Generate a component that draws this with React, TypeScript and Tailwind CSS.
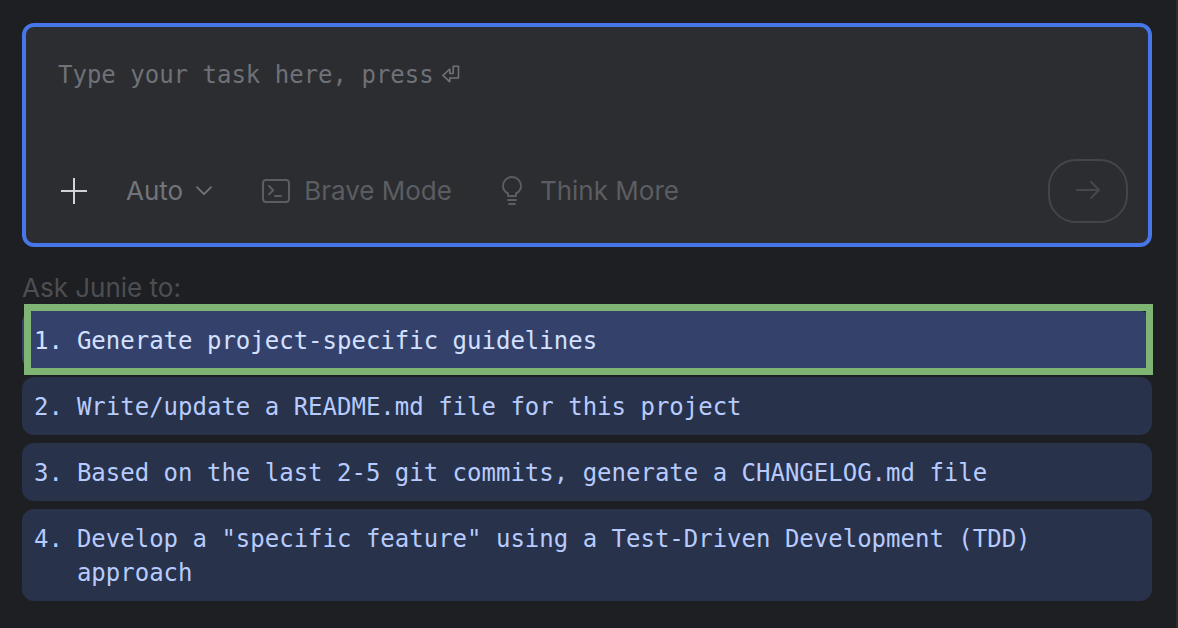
import { useState } from "react";

const suggestions = [
  "Generate project-specific guidelines",
  "Write/update a README.md file for this project",
  "Based on the last 2-5 git commits, generate a CHANGELOG.md file",
  'Develop a "specific feature" using a Test-Driven Development (TDD) approach',
];

function ReturnIcon() {
  return (
    <svg width="18" height="20" viewBox="0 0 18 20" fill="none" stroke="currentColor" strokeWidth="1.6" strokeLinejoin="round">
      <path d="M11.200 1.300h5.300v11.700H7.800v3.800L1 10.300l6.800-6.300v4.500h3.400z" />
    </svg>
  );
}

function PlusIcon() {
  return (
    <svg width="26" height="26" viewBox="0 0 26 26" fill="none" stroke="currentColor" strokeWidth="2">
      <path d="M13 0v26M0 13h26" />
    </svg>
  );
}

function ChevronIcon() {
  return (
    <svg width="16" height="10" viewBox="0 0 16 10" fill="none" stroke="currentColor" strokeWidth="1.8" strokeLinecap="round" strokeLinejoin="round">
      <path d="M1 1.2l7 7L15 1.200" />
    </svg>
  );
}

function TerminalIcon() {
  return (
    <svg width="28" height="24" viewBox="0 0 28 24" fill="none" stroke="currentColor" strokeWidth="2" strokeLinecap="round" strokeLinejoin="round">
      <rect x="1" y="1" width="26" height="22" rx="3" />
      <path d="M7 7l4.200 4.200L7 15.400M13 17h6" />
    </svg>
  );
}

function BulbIcon() {
  return (
    <svg width="20" height="30" viewBox="0 0 20 30" fill="none" stroke="currentColor" strokeWidth="2" strokeLinecap="round" strokeLinejoin="round">
      <path d="M6 20v-2.500C3 15.900 1 13.300 1 10a9 9 0 0 1 18 0c0 3.300-2 5.900-5 7.500V20z" />
      <path d="M6 24h8M7 28h6" />
    </svg>
  );
}

function ArrowIcon() {
  return (
    <svg width="24" height="20" viewBox="0 0 24 20" fill="none" stroke="currentColor" strokeWidth="2" strokeLinecap="round" strokeLinejoin="round">
      <path d="M1 9h22M15 1l8 8-8 8" />
    </svg>
  );
}

export default function App() {
  const [task, setTask] = useState("");
  const [brave, setBrave] = useState(false);
  const [think, setThink] = useState(false);

  return (
    <main className="min-h-screen bg-[#1e1f22] border-r-2 border-[#2b2d30] pt-[23px] pl-[22px] pr-6 pb-6 font-['Inter',sans-serif] text-[26px] leading-8">
      <form
        onSubmit={(e) => e.preventDefault()}
        className="rounded-xl border-4 border-[#4676e8] bg-[#2c2d30] pt-8 pb-5 pl-8 pr-5"
      >
        <div className="relative font-['DejaVu_Sans_Mono',monospace] text-2xl leading-8">
          <textarea
            aria-label="Task"
            value={task}
            onChange={(e) => setTask(e.target.value)}
            className="block h-25 w-full resize-none bg-transparent text-[#d1d3d9] outline-none"
          />
          {task === "" && (
            <div className="pointer-events-none absolute top-0 left-0 flex items-center gap-2 text-[#6f7178]">
              <span>Type your task here, press</span>
              <ReturnIcon />
            </div>
          )}
        </div>

        <div className="flex h-16 items-center text-[#5b5d62]">
          <button type="button" aria-label="Add context" className="ml-[3px] text-[#d1d3d9]">
            <PlusIcon />
          </button>
          <div className="relative ml-[39px] flex items-center text-[#72747b]">
            <select aria-label="Mode" className="field-sizing-content appearance-none bg-transparent pr-[29px] outline-none">
              <option>Auto</option>
            </select>
            <span className="pointer-events-none absolute right-0">
              <ChevronIcon />
            </span>
          </div>
          <button
            type="button"
            aria-pressed={brave}
            onClick={() => setBrave(!brave)}
            className="ml-[50px] flex items-center gap-3.5"
          >
            <TerminalIcon />
            Brave Mode
          </button>
          <button
            type="button"
            aria-pressed={think}
            onClick={() => setThink(!think)}
            className="ml-[50px] flex items-center gap-[18px]"
          >
            <BulbIcon />
            Think More
          </button>
          <button
            type="submit"
            aria-label="Send"
            className="ml-auto flex h-16 w-20 items-center justify-center rounded-[28px] border-2 border-[#434548] text-[#46484b]"
          >
            <ArrowIcon />
          </button>
        </div>
      </form>

      <h2 className="mt-[25px] mb-[7px] text-[#4c4e52]">Ask Junie to:</h2>

      <ol className="flex flex-col gap-2 font-['DejaVu_Sans_Mono',monospace] text-2xl leading-[34px]">
        {suggestions.map((item, index) => (
          <li key={item} className="relative">
            <button
              type="button"
              onClick={() => setTask(item)}
              className={
                index === 0
                  ? "flex w-full gap-3.5 rounded-xl bg-[#34426b] px-3 pt-[13px] pb-[11px] text-left text-[#d4e0ff]"
                  : "flex w-full gap-3.5 rounded-xl bg-[#28324a] px-3 pt-[13px] pb-[11px] text-left text-[#b7cbff]"
              }
            >
              <span>{index + 1}.</span>
              <span>{item}</span>
            </button>
            {index === 0 && (
              <div className="pointer-events-none absolute -top-[7px] -right-px -bottom-1.5 left-0.5 border-[7px] border-[#7eb574]" />
            )}
          </li>
        ))}
      </ol>
    </main>
  );
}
